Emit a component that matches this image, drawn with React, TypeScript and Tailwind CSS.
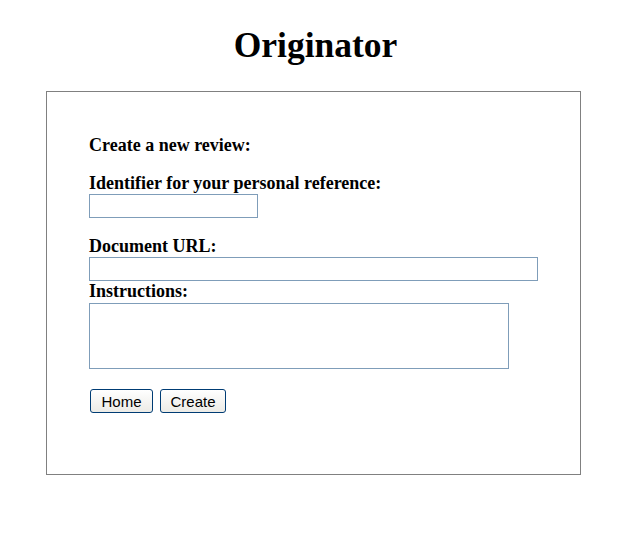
export default function App() {
  return (
    <div className="min-h-[537px] bg-white text-black font-['Liberation_Serif','Times_New_Roman',serif]">
      <h1 className="pt-[25px] text-center text-[35.5px] leading-[41px] font-bold">Originator</h1>

      {/* Form box */}
      <div className="ml-[46px] mt-[25px] w-[535px] h-[384px] border border-[#808080] pl-[42px] pt-[44px]">
        <div className="text-[18px] leading-[18px] font-bold">Create a new review:</div>

        <div className="mt-[20px] text-[18px] leading-[18px] font-bold">
          Identifier for your personal reference:
        </div>
        <input
          type="text"
          className="mt-[2px] block w-[169px] h-[24px] border border-[#7f9db9] bg-white outline-none"
        />

        <div className="mt-[19px] text-[18px] leading-[18px] font-bold">Document URL:</div>
        <input
          type="text"
          className="mt-[2px] block w-[449px] h-[24px] border border-[#7f9db9] bg-white outline-none"
        />

        <div className="mt-[1px] text-[18px] leading-[18px] font-bold">Instructions:</div>
        <textarea className="mt-[3px] block w-[420px] h-[66px] border border-[#7f9db9] bg-white outline-none resize-none" />

        <div className="mt-[20px] flex gap-[7px] pl-px">
          <button className="w-[63px] h-[24px] rounded-[3px] border border-[#003c74] bg-gradient-to-b from-white to-[#ecebe6] text-[15px] leading-none font-['Liberation_Sans',Arial,sans-serif]">
            Home
          </button>
          <button className="w-[66px] h-[24px] rounded-[3px] border border-[#003c74] bg-gradient-to-b from-white to-[#ecebe6] text-[15px] leading-none font-['Liberation_Sans',Arial,sans-serif]">
            Create
          </button>
        </div>
      </div>
    </div>
  );
}
